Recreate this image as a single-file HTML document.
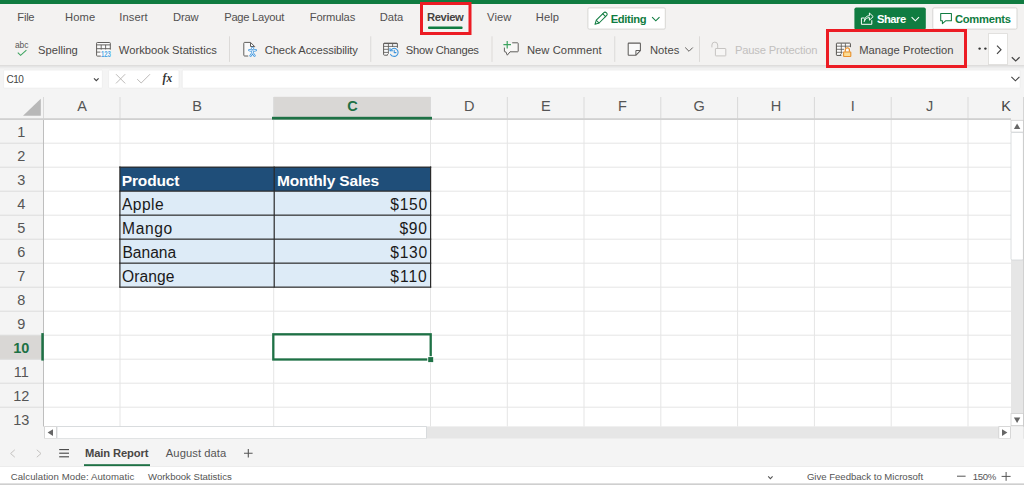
<!DOCTYPE html>
<html lang="en">
<head>
<meta charset="utf-8">
<title>Excel - Review - Manage Protection</title>
<style>
html,body{margin:0;padding:0;}
body{width:1024px;height:485px;overflow:hidden;position:relative;background:#f3f2f1;font-family:"Liberation Sans",sans-serif;}
#bg{position:absolute;left:0;top:0;width:1024px;height:485px;display:block;}
.t{position:absolute;white-space:nowrap;line-height:1;font-family:"Liberation Sans",sans-serif;}
.t.c{text-align:center;}
svg text{font-family:"Liberation Sans",sans-serif;}
</style>
</head>
<body>
<svg id="bg" width="1024" height="485" viewBox="0 0 1024 485">
<defs>
<linearGradient id="sh" x1="0" y1="0" x2="0" y2="1"><stop offset="0" stop-color="#000" stop-opacity="0.10"/><stop offset="1" stop-color="#000" stop-opacity="0"/></linearGradient>
</defs>
<!-- base areas -->
<rect x="0" y="0" width="1024" height="485" fill="#f3f2f1"/>
<rect x="0" y="66" width="1024" height="420" fill="#f4f4f4"/>
<rect x="0" y="65" width="1024" height="4" fill="url(#sh)"/>
<rect x="0" y="0" width="1024" height="4" fill="#107c41"/>
<rect x="428" y="26.6" width="34.6" height="2.5" rx="1" fill="#107c41"/>
<rect x="587.9" y="7.9" width="77.4" height="21.2" rx="1.3" fill="#fff" stroke="#d4d2d0" stroke-width="0.9"/>
<g fill="none" stroke="#107c41" stroke-width="1.05" stroke-linejoin="round" stroke-linecap="round"><path d="M595 24.3 L596.3 20.2 L603.9 12.6 a1.55 1.55 0 0 1 2.2 0 l0.6 0.6 a1.55 1.55 0 0 1 0 2.2 L599.1 23 Z"/><path d="M596.5 20.5 L598.9 22.9"/><path d="M602.8 13.8 L605.6 16.6"/></g>
<path d="M652.1 17.1 L655.8 20.8 L659.5 17.1" fill="none" stroke="#107c41" stroke-width="1.1"/>
<rect x="854.4" y="7.5" width="71.4" height="22.3" rx="1.8" fill="#107c41"/>
<g fill="none" stroke="#fff" stroke-width="1" stroke-linejoin="round" stroke-linecap="round"><path d="M864.2 18 H861.4 V24.3 H871.8 V20.6"/><path d="M864.3 21.2 C864.6 17.6 866.6 15.8 869.4 15.7 V13 L873.2 16.6 L869.4 20.2 V17.6 C867.2 17.6 865.4 18.6 864.3 21.2 Z"/></g>
<path d="M911.6 17.1 L915.3 20.8 L919 17.1" fill="none" stroke="#fff" stroke-width="1.1"/>
<rect x="932.8" y="7.9" width="84.2" height="21.2" rx="1.3" fill="#fff" stroke="#d4d2d0" stroke-width="0.9"/>
<path d="M940.7 13.4 H951.4 V20.8 H945.6 L942.4 23.6 V20.8 H940.7 Z" fill="none" stroke="#107c41" stroke-width="1.05" stroke-linejoin="round"/>
<rect x="229.1" y="36.3" width="0.8" height="25.6" fill="#d6d4d2"/>
<rect x="370.40000000000003" y="36.3" width="0.8" height="25.6" fill="#d6d4d2"/>
<rect x="491.6" y="36.3" width="0.8" height="25.6" fill="#d6d4d2"/>
<rect x="614.4" y="36.3" width="0.8" height="25.6" fill="#d6d4d2"/>
<rect x="699.0" y="36.3" width="0.8" height="25.6" fill="#d6d4d2"/>
<rect x="829" y="32" width="135" height="33.5" fill="#edebe9"/>
<rect x="988.6" y="33.6" width="18.8" height="31" fill="#fff" stroke="#dddbd9" stroke-width="0.8"/>
<path d="M997 45.6 L1001 49.7 L997 53.8" fill="none" stroke="#444" stroke-width="1.15"/>
<circle cx="979.6" cy="48.6" r="1.2" fill="#333"/><circle cx="985.4" cy="48.6" r="1.2" fill="#333"/>
<path d="M1011.8 57.2 L1015.7 61 L1019.6 57.2" fill="none" stroke="#444" stroke-width="1.2"/>
<path d="M685.2 47.5 L689 51.3 L692.8 47.5" fill="none" stroke="#605e5c" stroke-width="1"/>
<text x="14.9" y="48.1" font-size="8.6" fill="#5a5856" textLength="13.6" lengthAdjust="spacingAndGlyphs">abc</text>
<path d="M17.8 52.6 L20.6 55.3 L26.4 50.2" fill="none" stroke="#3ca35f" stroke-width="1.05"/>
<rect x="96.6" y="42.5" width="13.7" height="13.6" fill="#fbfbfb"/>
<g fill="none" stroke="#605e5c" stroke-width="1"><path d="M100.8 56.1 H97.3 a0.7 0.7 0 0 1 -0.7 -0.7 V43.2 a0.7 0.7 0 0 1 0.7 -0.7 H109.6 a0.7 0.7 0 0 1 0.7 0.7 V49.6"/><path d="M96.6 44.9 H110.3 M96.6 48.7 H110.3" stroke-width="0.95"/><path d="M96.6 52.1 H100.4 M101.2 44.9 V49.6 M105.6 44.9 V49.4" stroke-width="0.9"/></g>
<text x="100.9" y="56.5" font-size="8.2" font-weight="700" fill="#55a8e4" textLength="10" lengthAdjust="spacingAndGlyphs">123</text>
<path d="M243.8 42.4 H250.5 L254.6 46.5 V56 H243.8 Z" fill="#fafafa"/>
<path d="M248.2 56 H244.6 a0.8 0.8 0 0 1 -0.8 -0.8 V43.2 a0.8 0.8 0 0 1 0.8 -0.8 H250.5 L254.6 46.5 V47.2 M250.5 42.6 V46.5 H254.4" fill="none" stroke="#605e5c" stroke-width="1" stroke-linejoin="round"/>
<g fill="none" stroke="#3a93dc" stroke-width="2.3" stroke-linecap="round" stroke-linejoin="round"><path d="M249.3 50.2 L252.5 51 L255.8 50.2"/><path d="M252.5 51 V52.8 L250.6 55.6 M252.5 52.8 L254.5 55.6"/></g>
<circle cx="252.5" cy="48.4" r="1.15" fill="#fff" stroke="#3a93dc" stroke-width="0.9"/>
<g fill="none" stroke="#f4f9fe" stroke-width="0.85" stroke-linecap="round" stroke-linejoin="round"><path d="M249.3 50.2 L252.5 51 L255.8 50.2"/><path d="M252.5 51 V52.8 L250.6 55.6 M252.5 52.8 L254.5 55.6"/></g>
<path d="M383.6 43.2 H397.4 V49 H390 V53.6 L388.4 55.2 H383.6 Z" fill="#fbfbfb"/>
<g fill="none" stroke="#605e5c" stroke-width="1"><path d="M387.6 55.2 H384.4 a0.8 0.8 0 0 1 -0.8 -0.8 V44 a0.8 0.8 0 0 1 0.8 -0.8 H396.6 a0.8 0.8 0 0 1 0.8 0.8 V47.8"/><path d="M383.6 43.5 H397.4" stroke-width="1.15"/><path d="M383.6 46.4 H397.4 M383.6 49.3 H388.4 M383.6 52.4 H388.4 M388.4 43.8 V53.6 L387 55.2 M392.6 43.8 V47" stroke-width="0.85"/></g>
<g fill="none" stroke="#3a93dc" stroke-width="1.05" stroke-linecap="round" stroke-linejoin="round"><path d="M390.4 50.6 A4.05 4.05 0 1 1 390.6 54.4"/><path d="M390 48.2 V50.8 H392.6"/><path d="M394.2 50.2 V52.6 H396"/></g>
<path d="M512.2 42.8 H517.6 a0.6 0.6 0 0 1 0.6 0.6 V51.2 a0.6 0.6 0 0 1 -0.6 0.6 H510 L507.3 55.2 L505.9 51.9 H505 a0.6 0.6 0 0 1 -0.6 -0.6 V47.6" fill="#f8f7f6" stroke="#605e5c" stroke-width="1" stroke-linejoin="round"/>
<path d="M503.4 44.7 H511 M507.2 41 V48.4" fill="none" stroke="#3ca35f" stroke-width="1.2"/>
<path d="M635.8 55.3 H628.8 a0.6 0.6 0 0 1 -0.6 -0.6 V43.7 a0.6 0.6 0 0 1 0.6 -0.6 H639.8 a0.6 0.6 0 0 1 0.6 0.6 V50.6 Z" fill="#fafafa" stroke="#605e5c" stroke-width="1.05" stroke-linejoin="round"/>
<path d="M640.2 50.5 H635.9 V55" fill="none" stroke="#605e5c" stroke-width="1" stroke-linejoin="round"/>
<g fill="none" stroke="#c6c4c2" stroke-width="1"><rect x="715.4" y="48.5" width="10.4" height="7.4" rx="0.5" fill="#f7f6f5"/><path d="M711.9 47.4 V45 a2.9 2.9 0 0 1 5.8 0 V48.4"/></g>
<path d="M836.4 43 H850.4 V51 H843 V53.8 L841.4 55.5 H836.4 Z" fill="#fbfbfb"/>
<g fill="none" stroke="#55534f" stroke-width="0.9"><path d="M841.4 55.4 H837 a0.6 0.6 0 0 1 -0.6 -0.6 V43.7 a0.6 0.6 0 0 1 0.6 -0.6 H849.8 a0.6 0.6 0 0 1 0.6 0.6 V47.2" stroke-width="1"/><path d="M836.4 46.2 H850.4 M836.4 49.3 H844 M836.4 52.3 H842.6 M841.3 43.4 V53.8 L839.9 55.3 M845.4 43.4 V48" stroke-width="0.8"/></g>
<path d="M845.3 51.8 V49.8 a2.05 2.05 0 0 1 4.1 0 V51.8" fill="none" stroke="#e8912d" stroke-width="1.25"/>
<rect x="843.6" y="52" width="7.2" height="4.5" rx="0.5" fill="#fcdc94" stroke="#e8912d" stroke-width="1.1"/>
<rect x="421.5" y="3.5" width="48.5" height="30" fill="none" stroke="#ec1c24" stroke-width="3"/>
<rect x="827.5" y="30.5" width="138" height="36" fill="none" stroke="#ec1c24" stroke-width="3"/>
<rect x="3.6" y="70" width="98.8" height="18.2" rx="1" fill="#fff" stroke="#ececec" stroke-width="0.8"/>
<path d="M94 78.3 L96.3 80.6 L98.6 78.3" fill="none" stroke="#444" stroke-width="1.2"/>
<rect x="108.6" y="70" width="70.4" height="18.2" rx="1" fill="#fff" stroke="#ececec" stroke-width="0.8"/>
<path d="M116 74.2 L125.2 83.4 M125.2 74.2 L116 83.4" fill="none" stroke="#b4b2b0" stroke-width="0.9"/>
<path d="M137.2 79.2 L141.2 83 L150 74.2" fill="none" stroke="#b4b2b0" stroke-width="0.9"/>
<text x="162.6" y="81.6" font-size="11.5" font-weight="700" font-style="italic" style="font-family:'Liberation Serif',serif" fill="#333">fx</text>
<rect x="182.2" y="70" width="838" height="18.2" rx="1" fill="#fff" stroke="#ececec" stroke-width="0.8"/>
<path d="M1011.4 76.8 L1015.4 80.8 L1019.4 76.8" fill="none" stroke="#444" stroke-width="1.1"/>
<rect x="44" y="120" width="967" height="306.5" fill="#fff"/>
<rect x="273.8" y="96.8" width="156.7" height="21" fill="#d9d7d5"/>
<rect x="0" y="335.3" width="42" height="24" fill="#d9d7d5"/>
<rect x="43.0" y="97" width="1" height="22" fill="#d9d9d9"/>
<rect x="119.5" y="97" width="1" height="22" fill="#d9d9d9"/>
<rect x="273.2" y="97" width="1" height="22" fill="#d9d9d9"/>
<rect x="430.0" y="97" width="1" height="22" fill="#d9d9d9"/>
<rect x="506.8" y="97" width="1" height="22" fill="#d9d9d9"/>
<rect x="583.5" y="97" width="1" height="22" fill="#d9d9d9"/>
<rect x="660.3" y="97" width="1" height="22" fill="#d9d9d9"/>
<rect x="737.1" y="97" width="1" height="22" fill="#d9d9d9"/>
<rect x="813.9" y="97" width="1" height="22" fill="#d9d9d9"/>
<rect x="890.7" y="97" width="1" height="22" fill="#d9d9d9"/>
<rect x="967.5" y="97" width="1" height="22" fill="#d9d9d9"/>
<rect x="0" y="118.2" width="1011" height="1.8" fill="#d0d0d0"/>
<rect x="43" y="120" width="1" height="306.5" fill="#bebebe"/>
<rect x="0" y="142.7" width="43" height="1" fill="#dcdcdc"/>
<rect x="0" y="166.7" width="43" height="1" fill="#dcdcdc"/>
<rect x="0" y="190.7" width="43" height="1" fill="#dcdcdc"/>
<rect x="0" y="214.7" width="43" height="1" fill="#dcdcdc"/>
<rect x="0" y="238.7" width="43" height="1" fill="#dcdcdc"/>
<rect x="0" y="262.7" width="43" height="1" fill="#dcdcdc"/>
<rect x="0" y="286.7" width="43" height="1" fill="#dcdcdc"/>
<rect x="0" y="310.7" width="43" height="1" fill="#dcdcdc"/>
<rect x="0" y="334.7" width="43" height="1" fill="#dcdcdc"/>
<rect x="0" y="358.7" width="43" height="1" fill="#dcdcdc"/>
<rect x="0" y="382.7" width="43" height="1" fill="#dcdcdc"/>
<rect x="0" y="406.7" width="43" height="1" fill="#dcdcdc"/>
<rect x="119.5" y="120" width="1" height="306.5" fill="#e5e5e5"/>
<rect x="273.2" y="120" width="1" height="306.5" fill="#e5e5e5"/>
<rect x="430.0" y="120" width="1" height="306.5" fill="#e5e5e5"/>
<rect x="506.8" y="120" width="1" height="306.5" fill="#e5e5e5"/>
<rect x="583.5" y="120" width="1" height="306.5" fill="#e5e5e5"/>
<rect x="660.3" y="120" width="1" height="306.5" fill="#e5e5e5"/>
<rect x="737.1" y="120" width="1" height="306.5" fill="#e5e5e5"/>
<rect x="813.9" y="120" width="1" height="306.5" fill="#e5e5e5"/>
<rect x="890.7" y="120" width="1" height="306.5" fill="#e5e5e5"/>
<rect x="967.5" y="120" width="1" height="306.5" fill="#e5e5e5"/>
<rect x="44" y="142.7" width="967" height="1" fill="#e5e5e5"/>
<rect x="44" y="166.7" width="967" height="1" fill="#e5e5e5"/>
<rect x="44" y="190.7" width="967" height="1" fill="#e5e5e5"/>
<rect x="44" y="214.7" width="967" height="1" fill="#e5e5e5"/>
<rect x="44" y="238.7" width="967" height="1" fill="#e5e5e5"/>
<rect x="44" y="262.7" width="967" height="1" fill="#e5e5e5"/>
<rect x="44" y="286.7" width="967" height="1" fill="#e5e5e5"/>
<rect x="44" y="310.7" width="967" height="1" fill="#e5e5e5"/>
<rect x="44" y="334.7" width="967" height="1" fill="#e5e5e5"/>
<rect x="44" y="358.7" width="967" height="1" fill="#e5e5e5"/>
<rect x="44" y="382.7" width="967" height="1" fill="#e5e5e5"/>
<rect x="44" y="406.7" width="967" height="1" fill="#e5e5e5"/>
<path d="M40.8 98.8 L40.8 115.8 L23 115.8 Z" fill="#b8b8b8"/>
<rect x="120" y="167" width="310.5" height="24" fill="#1f4e79"/>
<rect x="120" y="191" width="310.5" height="96" fill="#ddebf7"/>
<rect x="119.3" y="166.55" width="311.9" height="1.2" fill="#2a2a2a"/>
<rect x="119.3" y="190.55" width="311.9" height="1.2" fill="#2a2a2a"/>
<rect x="119.3" y="214.55" width="311.9" height="1.2" fill="#2a2a2a"/>
<rect x="119.3" y="238.55" width="311.9" height="1.2" fill="#2a2a2a"/>
<rect x="119.3" y="262.55" width="311.9" height="1.2" fill="#2a2a2a"/>
<rect x="119.3" y="286.55" width="311.9" height="1.2" fill="#2a2a2a"/>
<rect x="119.30000000000001" y="166.5" width="1.2" height="121" fill="#2a2a2a"/>
<rect x="273.59999999999997" y="166.5" width="1.2" height="121" fill="#2a2a2a"/>
<rect x="430.0" y="166.5" width="1.2" height="121" fill="#2a2a2a"/>
<rect x="272" y="116.8" width="160" height="2.8" fill="#1e7145"/>
<rect x="41.3" y="333.1" width="2.5" height="27.5" fill="#1e7145"/>
<rect x="273.3" y="334.3" width="157.4" height="25.2" fill="none" stroke="#1e7145" stroke-width="2.3"/>
<rect x="427.3" y="356.2" width="6.6" height="6.6" fill="#fff"/>
<rect x="428.2" y="357.1" width="5" height="5" fill="#1e7145"/>
<rect x="1011" y="120" width="13" height="306.5" fill="#e6e6e6"/>
<rect x="1011" y="120.3" width="12.4" height="11.8" fill="#fff" stroke="#d0d0d0" stroke-width="0.8"/>
<path d="M1013.9 129 L1017.1 123.6 L1020.3 129 Z" fill="#666"/>
<rect x="1011" y="132.5" width="12.4" height="127.5" rx="1.2" fill="#fff" stroke="#d2d5d8" stroke-width="0.8"/>
<rect x="1011" y="413.6" width="12.4" height="12" fill="#fff" stroke="#d0d0d0" stroke-width="0.8"/>
<path d="M1013.9 417.4 L1020.3 417.4 L1017.1 422.9 Z" fill="#666"/>
<rect x="1023.3" y="97" width="0.7" height="330" fill="#c8c8c8"/><rect x="1023.4" y="427" width="0.6" height="40" fill="#dcdcdc"/>
<rect x="44" y="426.5" width="967" height="12.2" fill="#e6e6e6"/>
<rect x="44.6" y="426.6" width="11.8" height="11.8" fill="#fff" stroke="#d0d0d0" stroke-width="0.8"/>
<path d="M53 429.3 L53 435.9 L47.6 432.6 Z" fill="#666"/>
<rect x="57" y="426.6" width="369.5" height="11.8" fill="#fff" stroke="#d2d5d8" stroke-width="0.8"/>
<rect x="998.8" y="426.6" width="11.8" height="11.8" fill="#fff" stroke="#d0d0d0" stroke-width="0.8"/>
<path d="M1002 429.3 L1002 435.9 L1007.4 432.6 Z" fill="#666"/>
<rect x="0" y="438.7" width="1024" height="28" fill="#f4f4f4"/>
<path d="M14.8 449.8 L10.6 453.5 L14.8 457.2" fill="none" stroke="#c4c2c0" stroke-width="1"/>
<path d="M36.8 449.8 L41 453.5 L36.8 457.2" fill="none" stroke="#c4c2c0" stroke-width="1"/>
<rect x="59.2" y="449.05" width="9.8" height="1.1" fill="#444"/>
<rect x="59.2" y="452.65" width="9.8" height="1.1" fill="#444"/>
<rect x="59.2" y="456.25" width="9.8" height="1.1" fill="#444"/>
<rect x="84" y="464.2" width="66" height="2.3" fill="#1e7145"/>
<path d="M244 453.3 H252.6 M248.3 449 V457.6" stroke="#555" stroke-width="1.1" fill="none"/>
<rect x="0" y="466.5" width="1024" height="17" fill="#fff"/>
<rect x="0" y="466.2" width="1024" height="0.7" fill="#e6e6e6"/>
<rect x="0" y="483.4" width="1024" height="1.6" fill="#cfcfcf"/>
<path d="M768.2 476.4 L770.4 478.6 L772.6 476.4" fill="none" stroke="#555" stroke-width="1.1"/>
<path d="M957 476.2 H965.6" stroke="#555" stroke-width="1" fill="none"/>
<path d="M1001.6 476.4 H1010.6 M1006.1 472 V480.8" stroke="#555" stroke-width="1" fill="none"/>
</svg>
<span class="t" style="left:17.33px;top:11.52px;font-size:11.2px;font-weight:400;color:#525050;letter-spacing:-0.256px;">File</span>
<span class="t" style="left:64.93px;top:11.52px;font-size:11.2px;font-weight:400;color:#525050;letter-spacing:0.141px;">Home</span>
<span class="t" style="left:119.33px;top:11.52px;font-size:11.2px;font-weight:400;color:#525050;letter-spacing:0.071px;">Insert</span>
<span class="t" style="left:172.93px;top:11.52px;font-size:11.2px;font-weight:400;color:#525050;letter-spacing:-0.113px;">Draw</span>
<span class="t" style="left:224.23px;top:11.52px;font-size:11.2px;font-weight:400;color:#525050;letter-spacing:-0.270px;">Page Layout</span>
<span class="t" style="left:309.73px;top:11.52px;font-size:11.2px;font-weight:400;color:#525050;letter-spacing:-0.158px;">Formulas</span>
<span class="t" style="left:379.73px;top:11.52px;font-size:11.2px;font-weight:400;color:#525050;letter-spacing:-0.071px;">Data</span>
<span class="t" style="left:427.08px;top:11.52px;font-size:11.2px;font-weight:700;color:#454341;letter-spacing:-0.384px;">Review</span>
<span class="t" style="left:487.08px;top:11.52px;font-size:11.2px;font-weight:400;color:#525050;letter-spacing:0.053px;">View</span>
<span class="t" style="left:535.73px;top:11.52px;font-size:11.2px;font-weight:400;color:#525050;letter-spacing:0.123px;">Help</span>
<span class="t" style="left:610.63px;top:13.62px;font-size:11.2px;font-weight:700;color:#107c41;letter-spacing:-0.328px;">Editing</span>
<span class="t" style="left:876.93px;top:13.62px;font-size:11.2px;font-weight:700;color:#fff;letter-spacing:-0.457px;">Share</span>
<span class="t" style="left:954.93px;top:13.62px;font-size:11.2px;font-weight:700;color:#107c41;letter-spacing:-0.263px;">Comments</span>
<span class="t" style="left:38.08px;top:44.52px;font-size:11.2px;font-weight:400;color:#4a4846;letter-spacing:-0.007px;">Spelling</span>
<span class="t" style="left:118.83px;top:44.52px;font-size:11.2px;font-weight:400;color:#4a4846;letter-spacing:-0.001px;">Workbook Statistics</span>
<span class="t" style="left:264.73px;top:44.52px;font-size:11.2px;font-weight:400;color:#4a4846;letter-spacing:-0.107px;">Check Accessibility</span>
<span class="t" style="left:405.83px;top:44.52px;font-size:11.2px;font-weight:400;color:#4a4846;letter-spacing:-0.249px;">Show Changes</span>
<span class="t" style="left:526.93px;top:44.52px;font-size:11.2px;font-weight:400;color:#4a4846;letter-spacing:0.075px;">New Comment</span>
<span class="t" style="left:649.93px;top:44.52px;font-size:11.2px;font-weight:400;color:#4a4846;letter-spacing:0.035px;">Notes</span>
<span class="t" style="left:734.93px;top:44.52px;font-size:11.2px;font-weight:400;color:#c2c0be;letter-spacing:-0.175px;">Pause Protection</span>
<span class="t" style="left:859.23px;top:44.52px;font-size:11.2px;font-weight:400;color:#4a4846;letter-spacing:0.026px;">Manage Protection</span>
<span class="t" style="left:6.40px;top:74.83px;font-size:10px;font-weight:400;color:#444;letter-spacing:-0.486px;">C10</span>
<span class="t" style="left:10.67px;top:471.87px;font-size:9.6px;font-weight:400;color:#555;letter-spacing:0.075px;">Calculation Mode: Automatic</span>
<span class="t" style="left:148.02px;top:471.87px;font-size:9.6px;font-weight:400;color:#555;letter-spacing:-0.021px;">Workbook Statistics</span>
<span class="t" style="left:806.92px;top:471.87px;font-size:9.6px;font-weight:400;color:#555;letter-spacing:-0.024px;">Give Feedback to Microsoft</span>
<span class="t" style="left:972.82px;top:471.87px;font-size:9.6px;font-weight:400;color:#555;letter-spacing:-0.346px;">150%</span>
<span class="t" style="left:84.93px;top:447.92px;font-size:11.2px;font-weight:700;color:#484644;letter-spacing:-0.112px;">Main Report</span>
<span class="t" style="left:165.83px;top:447.92px;font-size:11.2px;font-weight:400;color:#555;letter-spacing:0.072px;">August data</span>
<span class="t c" style="left:52.00px;width:60px;top:99.33px;font-size:14.5px;font-weight:400;color:#555;">A</span>
<span class="t c" style="left:167.00px;width:60px;top:99.33px;font-size:14.5px;font-weight:400;color:#555;">B</span>
<span class="t c" style="left:322.50px;width:60px;top:99.33px;font-size:14.5px;font-weight:700;color:#1e7145;">C</span>
<span class="t c" style="left:439.25px;width:60px;top:99.33px;font-size:14.5px;font-weight:400;color:#555;">D</span>
<span class="t c" style="left:515.75px;width:60px;top:99.33px;font-size:14.5px;font-weight:400;color:#555;">E</span>
<span class="t c" style="left:592.50px;width:60px;top:99.33px;font-size:14.5px;font-weight:400;color:#555;">F</span>
<span class="t c" style="left:669.25px;width:60px;top:99.33px;font-size:14.5px;font-weight:400;color:#555;">G</span>
<span class="t c" style="left:746.00px;width:60px;top:99.33px;font-size:14.5px;font-weight:400;color:#555;">H</span>
<span class="t c" style="left:822.75px;width:60px;top:99.33px;font-size:14.5px;font-weight:400;color:#555;">I</span>
<span class="t c" style="left:899.50px;width:60px;top:99.33px;font-size:14.5px;font-weight:400;color:#555;">J</span>
<span class="t c" style="left:976.00px;width:60px;top:99.33px;font-size:14.5px;font-weight:400;color:#444;">K</span>
<span class="t c" style="left:-8.80px;width:60px;top:124.73px;font-size:14.5px;font-weight:400;color:#555;">1</span>
<span class="t c" style="left:-8.80px;width:60px;top:148.73px;font-size:14.5px;font-weight:400;color:#555;">2</span>
<span class="t c" style="left:-8.80px;width:60px;top:172.73px;font-size:14.5px;font-weight:400;color:#555;">3</span>
<span class="t c" style="left:-8.80px;width:60px;top:196.73px;font-size:14.5px;font-weight:400;color:#555;">4</span>
<span class="t c" style="left:-8.80px;width:60px;top:220.73px;font-size:14.5px;font-weight:400;color:#555;">5</span>
<span class="t c" style="left:-8.80px;width:60px;top:244.73px;font-size:14.5px;font-weight:400;color:#555;">6</span>
<span class="t c" style="left:-8.80px;width:60px;top:268.73px;font-size:14.5px;font-weight:400;color:#555;">7</span>
<span class="t c" style="left:-8.80px;width:60px;top:292.73px;font-size:14.5px;font-weight:400;color:#555;">8</span>
<span class="t c" style="left:-8.80px;width:60px;top:316.73px;font-size:14.5px;font-weight:400;color:#555;">9</span>
<span class="t c" style="left:-8.80px;width:60px;top:340.73px;font-size:14.5px;font-weight:700;color:#1e7145;">10</span>
<span class="t c" style="left:-8.80px;width:60px;top:364.73px;font-size:14.5px;font-weight:400;color:#555;">11</span>
<span class="t c" style="left:-8.80px;width:60px;top:388.73px;font-size:14.5px;font-weight:400;color:#555;">12</span>
<span class="t c" style="left:-8.80px;width:60px;top:412.73px;font-size:14.5px;font-weight:400;color:#555;">13</span>
<span class="t" style="left:121.82px;top:172.88px;font-size:15.5px;font-weight:700;color:#fff;letter-spacing:-0.172px;">Product</span>
<span class="t" style="left:276.92px;top:172.88px;font-size:15.5px;font-weight:700;color:#fff;letter-spacing:-0.162px;">Monthly Sales</span>
<span class="t" style="left:121.91px;top:196.59px;font-size:15.6px;font-weight:400;color:#1a1a1a;letter-spacing:0.476px;">Apple</span>
<span class="t" style="left:390.31px;top:196.59px;font-size:15.6px;font-weight:400;color:#1a1a1a;letter-spacing:0.692px;">$150</span>
<span class="t" style="left:122.11px;top:220.59px;font-size:15.6px;font-weight:400;color:#1a1a1a;letter-spacing:0.597px;">Mango</span>
<span class="t" style="left:399.41px;top:220.59px;font-size:15.6px;font-weight:400;color:#1a1a1a;letter-spacing:0.780px;">$90</span>
<span class="t" style="left:122.51px;top:244.59px;font-size:15.6px;font-weight:400;color:#1a1a1a;letter-spacing:-0.032px;">Banana</span>
<span class="t" style="left:390.31px;top:244.59px;font-size:15.6px;font-weight:400;color:#1a1a1a;letter-spacing:0.692px;">$130</span>
<span class="t" style="left:122.01px;top:268.59px;font-size:15.6px;font-weight:400;color:#1a1a1a;letter-spacing:0.076px;">Orange</span>
<span class="t" style="left:390.31px;top:268.59px;font-size:15.6px;font-weight:400;color:#1a1a1a;letter-spacing:0.981px;">$110</span>
</body>
</html>
